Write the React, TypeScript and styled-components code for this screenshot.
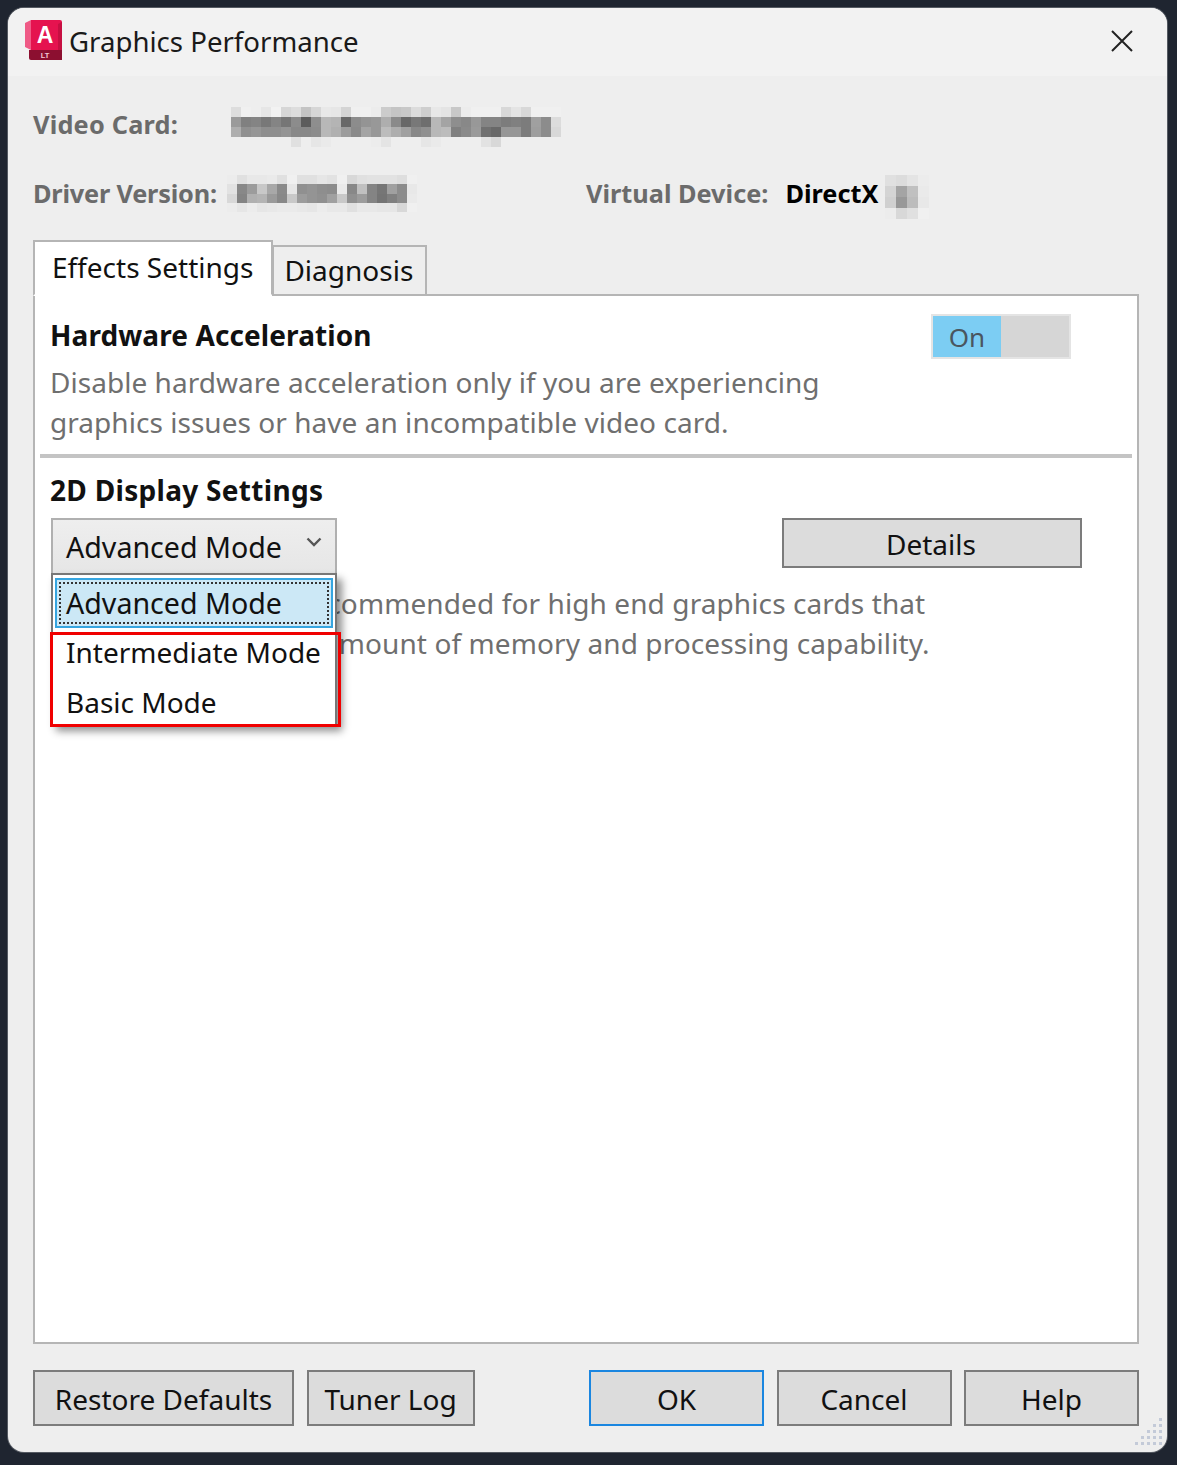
import React from 'react';
import styled, {createGlobalStyle} from 'styled-components';

const GlobalStyle = createGlobalStyle`
  html, body {
    margin: 0;
    padding: 0;
    background: #1f2530;
  }
  body {
    font-family: "Noto Sans", "Open Sans", "Liberation Sans", sans-serif;
    color: #111;
  }
`;

// grey levels of the blurred areas, row by row
const mosaic = (rows: string[]) => rows.map(row => row.split(' ').map(v => parseInt(v, 16)));

const videoCard = mosaic([
    'dd f0 ee e6 f2 d6 dd c4 d6 e8 e6 d4 f0 f0 ec cc c4 c8 dc ce e8 e4 c8 ec f0 f0 f0 d8 e4 d8 f0 f0 f0',
    '9a 80 84 78 84 76 8c 5c 8e b8 b4 68 8c 94 98 ae 8a 68 78 6e b8 a4 8e 88 98 84 84 7c 80 7c a0 8c dc',
    'ae 90 96 8e 8e 94 88 88 8c b8 b0 9c 8a a4 98 bc ae a0 88 90 b8 bc 80 8a 9a 70 68 96 96 7c 9e 8c d8',
    'ee ee ee ee ee ee e0 ee e6 ea ee ee ee ee ec e4 ee ee ee e6 ea ee ee ee ee e2 d8 ee ee ee ee ee ee',
]);

const driverVersion = mosaic([
    'ec e0 e8 e8 ea e0 f0 e0 e0 e6 e2 f0 d8 e0 e2 e2 e2 de f0',
    'e2 88 9c c8 a8 8a e6 90 94 8e 8c ea 88 c0 84 76 a0 8c e8',
    'd8 84 b0 b4 9a 88 c8 9c 94 90 a0 c8 90 9c 84 74 80 8c ea',
    'ec e6 ec e6 e8 ea ea e8 e6 ec e8 e8 e0 e8 e8 e6 e6 d8 f0',
]);

const directXVersion = mosaic([
    'e0 dc e4 ec',
    'd4 a4 c0 ea',
    'd0 98 bc e8',
    'ec d8 e0 f0',
]);

const Mosaic = ({data, cell, rowHeight = cell}: {data: number[][]; cell: number; rowHeight?: number}) => {
    return <MosaicSvg
        width={data[0].length * cell}
        height={data.length * rowHeight}
        viewBox={`0 0 ${data[0].length} ${data.length}`}
        preserveAspectRatio="none"
    >
        {data.map((row, y) => row.map((v, x) => {
            return <rect key={`${x}_${y}`} x={x} y={y} width="1.02" height="1.02" fill={`rgb(${v},${v},${v})`}/>;
        }))}
    </MosaicSvg>;
};

const AppIcon = () => {
    return <svg width="38" height="41" viewBox="0 0 38 41">
        <path d="M0 3 L6 0 V30 L0 27 Z" fill="#ef5a86"/>
        <path d="M6 0 H35 Q37 0 37 2 V30 H6 Z" fill="#e5134f"/>
        <path d="M33 4 L37 2 V30 H33 Z" fill="#c70f42"/>
        <path d="M4 30 H37 V40 H6 Q4 40 4 38 Z" fill="#8c0f30"/>
        <text x="20" y="23" textAnchor="middle" fontFamily="Liberation Sans, sans-serif" fontWeight="700" fontSize="23" fill="#fff">A</text>
        <text x="20" y="38" textAnchor="middle" fontFamily="Liberation Sans, sans-serif" fontWeight="700" fontSize="7.5" fill="#f2c6d2">LT</text>
    </svg>;
};

const grip = [[2, 0], [1, 1], [2, 1], [0, 2], [1, 2], [2, 2], [-1, 3], [0, 3], [1, 3], [2, 3], [-2, 4], [-1, 4], [0, 4], [1, 4], [2, 4]];

const App = () => {
    return <>
        <GlobalStyle/>
        <Page>
            <Window>
                <TitleBar>
                    <AppIcon/>
                    <Title>Graphics Performance</Title>
                    <CloseButton>
                        <svg width="22" height="22" viewBox="0 0 22 22">
                            <path d="M1 1 L21 21 M21 1 L1 21" stroke="#222" strokeWidth="2" fill="none"/>
                        </svg>
                    </CloseButton>
                </TitleBar>

                <Body>
                    <InfoRow>
                        <VideoLabel>Video Card:</VideoLabel>
                        <Mosaic data={videoCard} cell={10}/>
                    </InfoRow>
                    <DriverRow>
                        <DriverCell>
                            <DriverLabel>Driver Version:</DriverLabel>
                            <Mosaic data={driverVersion} cell={10} rowHeight={9.3}/>
                        </DriverCell>
                        <DeviceLabel>Virtual Device:</DeviceLabel>
                        <DeviceValue>DirectX</DeviceValue>
                        <DeviceMosaic>
                            <Mosaic data={directXVersion} cell={11}/>
                        </DeviceMosaic>
                    </DriverRow>

                    <Tabs>
                        <Tab $active>Effects Settings</Tab>
                        <Tab>Diagnosis</Tab>
                    </Tabs>

                    <Panel>
                        <HardwareSection>
                            <SectionHead>
                                <HardwareTitle>Hardware Acceleration</HardwareTitle>
                                <Toggle>
                                    <ToggleOn>On</ToggleOn>
                                </Toggle>
                            </SectionHead>
                            <Description>
                                Disable hardware acceleration only if you are experiencing<br/>
                                graphics issues or have an incompatible video card.
                            </Description>
                        </HardwareSection>
                        <Divider/>
                        <DisplaySection>
                            <DisplayTitle>2D Display Settings</DisplayTitle>
                            <Controls>
                                <SelectBox>
                                    <SelectWrap>
                                        <Select>
                                            Advanced Mode
                                            <svg width="16" height="10" viewBox="0 0 16 10">
                                                <path d="M1.5 1.5 L8 8 L14.5 1.5" stroke="#555" strokeWidth="2.4" fill="none"/>
                                            </svg>
                                        </Select>
                                        <Menu>
                                            <MenuItemActive><FocusRing>Advanced Mode</FocusRing></MenuItemActive>
                                            <MenuItem>Intermediate Mode</MenuItem>
                                            <MenuItem>Basic Mode</MenuItem>
                                            <Highlight/>
                                        </Menu>
                                    </SelectWrap>
                                </SelectBox>
                                <DetailsButton>Details</DetailsButton>
                            </Controls>
                            <ModeDescription>
                                Advanced Mode is recommended for high end graphics cards that<br/>
                                have a considerable amount of memory and processing capability.
                            </ModeDescription>
                        </DisplaySection>
                    </Panel>

                    <Footer>
                        <FooterGroup>
                            <FooterButton $width={261}>Restore Defaults</FooterButton>
                            <FooterButton $width={168}>Tuner Log</FooterButton>
                        </FooterGroup>
                        <FooterGroup>
                            <FooterButton $width={175} $primary>OK</FooterButton>
                            <FooterButton $width={175}>Cancel</FooterButton>
                            <FooterButton $width={175}>Help</FooterButton>
                        </FooterGroup>
                    </Footer>
                </Body>

                <Grip>
                    {grip.map(([x, y]) => {
                        return <GripDot key={`${x}_${y}`} style={{right: (2 - x) * 6 + 5, bottom: (4 - y) * 6 + 7}}/>;
                    })}
                </Grip>
            </Window>
        </Page>
    </>;
};

export default App;


const Page = styled.div`
  width: 1177px;
  height: 1465px;
  padding: 8px 10px 13px 8px;
  box-sizing: border-box;
  overflow: hidden;
`;

const Window = styled.div`
  position: relative;
  height: 100%;
  background: #eeeeee;
  border-radius: 16px;
  box-shadow: 0 0 0 1px #555a62;
  overflow: hidden;
`;

const TitleBar = styled.div`
  display: flex;
  align-items: center;
  height: 68px;
  padding: 0 34px 3px 17px;
  background: #f2f2f2;
  box-sizing: border-box;
`;

const Title = styled.div`
  flex: 1;
  margin-left: 6px;
  font-size: 27.6px;
  color: #1a1a1a;
`;

const CloseButton = styled.div`
  display: flex;
`;

const Body = styled.div`
  padding: 0 28px 0 25px;
`;

const InfoRow = styled.div`
  display: flex;
  align-items: center;
  height: 40px;
  margin-top: 31px;
`;

const DriverRow = styled(InfoRow)`
  margin-top: 27px;
`;

const InfoLabel = styled.div`
  padding-bottom: 6px;
  font-size: 25.3px;
  font-weight: 700;
  color: #6b6b6b;
  white-space: nowrap;
`;

const VideoLabel = styled(InfoLabel)`
  width: 198px;
  letter-spacing: 0.2px;
`;

const DriverCell = styled.div`
  display: flex;
  align-items: center;
  width: 553px;
`;

const DriverLabel = styled(InfoLabel)`
  width: 194px;
  padding-bottom: 2px;
  letter-spacing: -0.2px;
`;

const DeviceLabel = styled(InfoLabel)`
  padding-bottom: 2px;
`;

const DeviceValue = styled.div`
  margin: 0 7px 0 17px;
  padding-bottom: 2px;
  font-size: 25.3px;
  font-weight: 700;
  color: #000;
`;

const DeviceMosaic = styled.div`
  margin-top: 6px;
`;

const MosaicSvg = styled.svg`
  display: block;
  flex-shrink: 0;
  shape-rendering: crispEdges;
`;

const Tabs = styled.div`
  display: flex;
  align-items: flex-end;
  margin-top: 26px;
  position: relative;
  z-index: 1;
  height: 56px;
`;

const Tab = styled.div<{$active?: boolean}>`
  box-sizing: border-box;
  height: ${p => p.$active ? '56px' : '51px'};
  padding: ${p => p.$active ? '0 18px 2px 17px' : '0 12px 2px 10px'};
  margin-left: ${p => p.$active ? '0' : '-1px'};
  display: flex;
  align-items: center;
  font-size: 28px;
  color: #111;
  background: ${p => p.$active ? '#fff' : '#eeeeee'};
  border: 2px solid #b5b5b5;
  border-bottom: ${p => p.$active ? '2px solid #fff' : '2px solid #b5b5b5'};
`;

const Panel = styled.div`
  box-sizing: border-box;
  height: 1050px;
  margin-top: -2px;
  padding: 0 5px;
  background: #fff;
  border: 2px solid #b5b5b5;
`;

const HardwareSection = styled.div`
  padding: 18px 0 12px 11px;
`;

const SectionHead = styled.div`
  display: flex;
  justify-content: space-between;
  align-items: flex-start;
  padding-right: 61px;
  height: 48px;
`;

const SectionTitle = styled.div`
  margin-left: -1px;
  font-size: 28px;
  font-weight: 700;
  line-height: 48px;
  color: #111;
`;

const HardwareTitle = styled(SectionTitle)`
  margin-top: -3px;
  letter-spacing: 0.1px;
`;

const DisplayTitle = styled(SectionTitle)`
  margin-top: -1px;
  margin-bottom: 1px;
  letter-spacing: 0.3px;
`;

const Toggle = styled.div`
  box-sizing: border-box;
  width: 140px;
  height: 45px;
  background: #d6d6d6;
  border: 2px solid #e4e4e4;
`;

const ToggleOn = styled.div`
  width: 68px;
  height: 100%;
  display: flex;
  align-items: center;
  justify-content: center;
  background: #7ccdf3;
  font-size: 26px;
  color: #4a5660;
`;

const Description = styled.div`
  margin-left: -1px;
  font-size: 28px;
  line-height: 40px;
  letter-spacing: 0.04px;
  color: #6f6f6f;
  white-space: nowrap;
`;

const Divider = styled.div`
  height: 4px;
  background: #c4c4c4;
`;

const DisplaySection = styled.div`
  padding: 9px 0 0 11px;
`;

const Controls = styled.div`
  display: flex;
  justify-content: space-between;
  padding-right: 50px;
  margin-top: 4px;
  align-items: flex-start;
`;

const SelectBox = styled.div`
  width: 286px;
`;

const SelectWrap = styled.div`
  position: relative;
`;

const Select = styled.div`
  box-sizing: border-box;
  height: 57px;
  padding: 0 13px;
  display: flex;
  align-items: center;
  justify-content: space-between;
  font-size: 28.6px;
  color: #111;
  background: linear-gradient(#eeeeee, #e6e6e6);
  border: 2px solid #b0b0b0;

  svg {
    margin-top: -10px;
  }
`;

const Menu = styled.div`
  position: absolute;
  top: 55px;
  left: 0;
  width: 286px;
  height: 152px;
  box-sizing: border-box;
  padding: 3px 2px 0;
  background: #fff;
  border: 2px solid #777;
  border-bottom: none;
  box-shadow: 5px 6px 8px rgba(0, 0, 0, 0.45);
  z-index: 2;
`;

const MenuItemActive = styled.div`
  box-sizing: border-box;
  height: 50px;
  padding: 2px;
  background: #cce8f6;
  border: 2px solid #35a5e0;
`;

const FocusRing = styled.div`
  box-sizing: border-box;
  height: 100%;
  padding: 0 0 2px 5px;
  display: flex;
  align-items: center;
  font-size: 28.6px;
  color: #111;
  border: 2px dotted #333;
`;

const MenuItem = styled.div`
  height: 50px;
  padding: 0 0 2px 11px;
  box-sizing: border-box;
  display: flex;
  align-items: center;
  font-size: 28px;
  color: #111;
`;

const Highlight = styled.div`
  position: absolute;
  left: -3px;
  right: -6px;
  top: 57px;
  bottom: -2px;
  border: 3px solid #f00000;
  pointer-events: none;
`;

const DetailsButton = styled.div`
  box-sizing: border-box;
  width: 300px;
  height: 50px;
  padding: 2px 2px 0 0;
  display: flex;
  align-items: center;
  justify-content: center;
  font-size: 28px;
  color: #111;
  background: #dcdcdc;
  border: 2px solid #7c7c7c;
`;

const ModeDescription = styled.div`
  margin-top: 8px;
  margin-left: 1px;
  font-size: 28px;
  line-height: 40px;
  letter-spacing: 0.1px;
  color: #6f6f6f;
  white-space: nowrap;
`;

const Footer = styled.div`
  display: flex;
  justify-content: space-between;
  margin-top: 26px;
`;

const FooterGroup = styled.div`
  display: flex;
  gap: 12.5px;
`;

const FooterButton = styled.div<{$width: number; $primary?: boolean}>`
  box-sizing: border-box;
  width: ${p => p.$width}px;
  height: 56px;
  padding-top: 2px;
  display: flex;
  align-items: center;
  justify-content: center;
  font-size: 28px;
  color: #111;
  background: #dcdcdc;
  border: 2px solid ${p => p.$primary ? '#1a86e0' : '#7c7c7c'};
`;

const Grip = styled.div`
  position: absolute;
  right: 0;
  bottom: 0;
  width: 40px;
  height: 40px;
`;

const GripDot = styled.span`
  position: absolute;
  width: 3px;
  height: 3px;
  background: #c3cad8;
`;
